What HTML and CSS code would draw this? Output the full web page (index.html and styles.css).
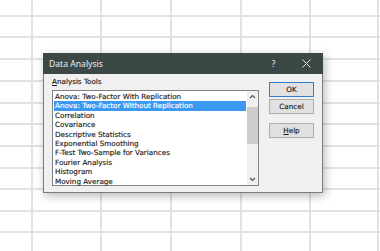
FILE: index.html
```html
<!DOCTYPE html>
<html>
<head>
<meta charset="utf-8">
<link rel="stylesheet" href="styles.css">
</head>
<body>
<div class="sheet">
  <div class="cols">
    <div class="c c0"></div><div class="c c1"></div><div class="c c2"></div><div class="c c3"></div><div class="c c4"></div><div class="c c5"></div><div class="c c6"></div>
  </div>
  <div class="rows">
    <div class="r r17"></div><div class="r r21"></div><div class="r r22"></div><div class="r r22"></div><div class="r r22"></div><div class="r r21"></div><div class="r r22"></div><div class="r r22"></div><div class="r r21"></div><div class="r r22"></div><div class="r r21"></div><div class="r rlast"></div>
  </div>

  <div class="dialog">
    <div class="titlebar">
      <span class="title">Data Analysis</span>
      <span class="tb-btn help-q">?</span>
      <span class="tb-btn close">
        <svg width="9" height="9" viewBox="0 0 9 9"><path d="M0.5 0.5 L8.5 8.5 M8.5 0.5 L0.5 8.5" stroke="#e6e6e6" stroke-width="1" fill="none"/></svg>
      </span>
    </div>
    <div class="content">
      <div class="left">
        <div class="label"><u>A</u>nalysis Tools</div>
        <div class="listbox">
          <div class="items">
            <div class="item">Anova: Two-Factor With Replication</div>
            <div class="item selected">Anova: Two-Factor Without Replication</div>
            <div class="item">Correlation</div>
            <div class="item">Covariance</div>
            <div class="item">Descriptive Statistics</div>
            <div class="item">Exponential Smoothing</div>
            <div class="item">F-Test Two-Sample for Variances</div>
            <div class="item">Fourier Analysis</div>
            <div class="item">Histogram</div>
            <div class="item">Moving Average</div>
          </div>
          <div class="scrollbar">
            <div class="arrow">
              <svg width="7" height="5" viewBox="0 0 7 5"><path d="M1 4 L3.5 1.5 L6 4" stroke="#555" stroke-width="1.2" fill="none"/></svg>
            </div>
            <div class="track"><div class="thumb"></div></div>
            <div class="arrow">
              <svg width="7" height="5" viewBox="0 0 7 5"><path d="M1 1 L3.5 3.5 L6 1" stroke="#555" stroke-width="1.2" fill="none"/></svg>
            </div>
          </div>
        </div>
      </div>
      <div class="right">
        <div class="btn default">OK</div>
        <div class="btn">Cancel</div>
        <div class="btn help"><u>H</u>elp</div>
      </div>
    </div>
  </div>
</div>
</body>
</html>
```

FILE: styles.css
```css
html, body {
  margin: 0;
  padding: 0;
  background: #ffffff;
}
.sheet {
  position: relative;
  width: 380px;
  height: 251px;
  overflow: hidden;
  background: #ffffff;
}
.cols, .rows {
  position: absolute;
  inset: 0;
  display: flex;
}
.rows { flex-direction: column; }
.c {
  flex: none;
  height: 100%;
  box-sizing: border-box;
  border-right: 2px solid #e2e2e2;
}
.c0 { width: 33px; }
.c1 { width: 69px; }
.c2 { width: 70px; }
.c3 { width: 70px; }
.c4 { width: 69px; }
.c5 { width: 68px; }
.c6 { width: 60px; border-right: none; }
.r {
  flex: none;
  width: 100%;
  box-sizing: border-box;
  border-bottom: 2px solid #e2e2e2;
}
.r17 { height: 17px; }
.r21 { height: 21px; }
.r22 { height: 22px; }
.rlast { height: 20px; border-bottom: none; }

.dialog {
  position: absolute;
  left: 43px;
  top: 53px;
  width: 280px;
  height: 140px;
  box-sizing: border-box;
  border: 1px solid #7c7c7c;
  border-top: none;
  background: #f0f0f0;
  box-shadow: 2px 3px 9px rgba(0,0,0,0.28);
  display: flex;
  flex-direction: column;
  font-family: "DejaVu Sans", sans-serif;
  color: #000;
}
.titlebar {
  height: 21px;
  margin: 0 -1px;
  background: #3b4846;
  display: flex;
  align-items: center;
  padding-left: 6px;
  flex: none;
}
.title {
  font-family: "Noto Sans", sans-serif;
  font-size: 8.6px;
  color: #ececec;
  flex: 1;
}
.tb-btn {
  width: 33px;
  height: 21px;
  display: flex;
  align-items: center;
  justify-content: center;
  color: #e6e6e6;
}
.help-q {
  font-family: "Noto Sans", sans-serif;
  font-size: 9px;
}
.content {
  display: flex;
  padding: 3px 0 0 8px;
  gap: 10px;
  -webkit-text-stroke: 0.15px currentColor;
}
.left {
  display: flex;
  flex-direction: column;
}
.label {
  font-size: 7.2px;
  line-height: 10px;
  height: 10px;
  margin-bottom: 3px;
  color: #1a1a1a;
}
.label u, .help u { text-decoration-thickness: 1px; text-underline-offset: 1px; }
.listbox {
  width: 207px;
  height: 96px;
  box-sizing: border-box;
  border: 1px solid #828282;
  background: #ffffff;
  display: flex;
}
.items {
  flex: 1;
  padding: 1px 1px 0 1px;
}
.item {
  height: 9.4px;
  line-height: 9.4px;
  font-size: 7.2px;
  padding-left: 1px;
  white-space: nowrap;
  overflow: hidden;
  color: #1a1a1a;
}
.item.selected {
  background: #3b99f2;
  color: #ffffff;
}
.scrollbar {
  width: 11px;
  background: #f0f0f0;
  display: flex;
  flex-direction: column;
}
.arrow {
  height: 11px;
  display: flex;
  align-items: center;
  justify-content: center;
  flex: none;
}
.track {
  flex: 1;
  padding-top: 5px;
}
.thumb {
  height: 37px;
  background: #cdcdcd;
}
.right {
  display: flex;
  flex-direction: column;
  padding-top: 5px;
}
.btn {
  width: 45px;
  height: 15px;
  box-sizing: border-box;
  border: 1px solid #adadad;
  background: #e1e1e1;
  font-size: 7.2px;
  display: flex;
  align-items: center;
  justify-content: center;
  margin-bottom: 2px;
  color: #1a1a1a;
}
.btn.default {
  border-color: #2f7fd0;
}
.btn.help {
  margin-top: 7px;
}
```
